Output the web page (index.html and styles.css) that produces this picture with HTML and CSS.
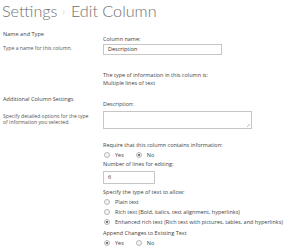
FILE: index.html
```html
<!DOCTYPE html>
<html>
<head>
<meta charset="utf-8">
<link rel="stylesheet" href="styles.css">
</head>
<body>
<div class="title"><span>Settings</span><span class="sep">›</span><span>Edit Column</span></div>

<div class="section s1">
  <div class="left">
    <div class="sec-title">Name and Type</div>
    <div class="sec-desc d1">Type a name for this column.</div>
  </div>
  <div class="right">
    <div class="label l-colname">Column name:</div>
    <div class="input name-input">Description</div>
    <div class="label l-type">The type of information in this column is:</div>
    <div class="label l-multi">Multiple lines of text</div>
  </div>
</div>

<div class="section s2">
  <div class="left">
    <div class="sec-title t2">Additional Column Settings</div>
    <div class="sec-desc d2">Specify detailed options for the type<br>of information you selected.</div>
  </div>
  <div class="right">
    <div class="label l-desc">Description:</div>
    <div class="textarea"><span class="grip"></span></div>
    <div class="label l-req">Require that this column contains information:</div>
    <div class="radios row">
      <span class="opt"><span class="radio"></span>Yes</span>
      <span class="opt"><span class="radio on"></span>No</span>
    </div>
    <div class="label l-lines">Number of lines for editing:</div>
    <div class="input lines-input">6</div>
    <div class="label l-spec">Specify the type of text to allow:</div>
    <div class="radios"><span class="opt"><span class="radio"></span>Plain text</span></div>
    <div class="radios"><span class="opt"><span class="radio"></span>Rich text (Bold, italics, text alignment, hyperlinks)</span></div>
    <div class="radios"><span class="opt"><span class="radio on"></span>Enhanced rich text (Rich text with pictures, tables, and hyperlinks)</span></div>
    <div class="label l-append">Append Changes to Existing Text</div>
    <div class="radios row">
      <span class="opt"><span class="radio on"></span>Yes</span>
      <span class="opt"><span class="radio"></span>No</span>
    </div>
  </div>
</div>
</body>
</html>
```
FILE: styles.css
```css
html, body {
  margin: 0;
  padding: 0;
  background: #fff;
  width: 299px;
  height: 251px;
  overflow: hidden;
  font-family: "Open Sans", "Noto Sans", sans-serif;
  color: #444;
}
.title {
  padding: 1px 0 0 2px;
  line-height: 20px;
  font-family: Lato, "Open Sans", sans-serif;
  font-size: 16.2px;
  font-weight: 300;
  color: #707070;
  display: flex;
  white-space: nowrap;
}
.title .sep {
  font-size: 9px;
  color: #a0a0a0;
  margin: 1px 6px 0 5px;
}
.section {
  display: flex;
}
.s1 { margin-top: 6px; height: 61px; }
.left {
  width: 100px;
  padding-left: 3px;
  flex: none;
}
.right {
  flex: 1;
}
.sec-title {
  font-size: 5.6px;
  line-height: 10px;
  margin-top: 1px;
  color: #444;
  white-space: nowrap;
}
.sec-desc {
  font-size: 5.1px;
  line-height: 5.5px;
  color: #555;
  white-space: nowrap;
}
.d1 { margin-top: 7px; }
.t2 { margin-top: 5px; }
.d2 { margin-top: 10px; }
.label {
  font-size: 5.5px;
  line-height: 10px;
  white-space: nowrap;
  color: #444;
}
.l-colname { margin-top: 6px; }
.input {
  box-sizing: border-box;
  border: 1px solid #c6c6c6;
  height: 11px;
  font-size: 5.5px;
  line-height: 9px;
  padding-left: 4px;
  color: #333;
}
.name-input { width: 119px; }
.l-type { margin-top: 16px; line-height: 8px; }
.l-multi { line-height: 8px; }
.l-desc { margin-top: 10px; }
.textarea {
  box-sizing: border-box;
  border: 1px solid #c6c6c6;
  width: 149px;
  height: 18px;
  margin-top: 2px;
  position: relative;
}
.grip {
  position: absolute;
  right: 1px;
  bottom: 1px;
  width: 3px;
  height: 3px;
  background: linear-gradient(135deg, transparent 45%, #bbb 45%, #bbb 60%, transparent 60%);
}
.l-req { margin-top: 11px; }
.radios {
  font-size: 5.5px;
  line-height: 10px;
  white-space: nowrap;
  color: #444;
  display: flex;
  gap: 11px;
}
.opt {
  display: flex;
  align-items: center;
}
.radio {
  box-sizing: border-box;
  width: 6px;
  height: 6px;
  border-radius: 50%;
  border: 1px solid #b8b8b8;
  background: #f4f4f4;
  margin: 0 5px 0 1px;
  position: relative;
}
.radio.on::after {
  content: "";
  position: absolute;
  left: 1px;
  top: 1px;
  width: 2px;
  height: 2px;
  border-radius: 50%;
  background: #444;
}
.l-lines { line-height: 9px; }
.lines-input {
  width: 52px;
  height: 13px;
  line-height: 11px;
  margin-top: 2px;
}
.l-spec { margin-top: 3px; }
.l-append { margin-top: 1px; }
```
